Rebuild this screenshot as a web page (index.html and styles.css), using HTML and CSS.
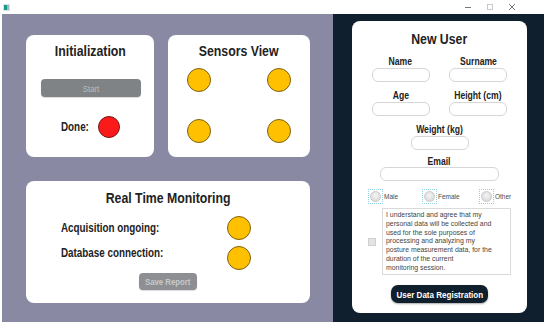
FILE: index.html
```html
<!DOCTYPE html>
<html>
<head>
<meta charset="utf-8">
<link rel="stylesheet" href="styles.css">
</head>
<body>
<div class="titlebar">
  <svg class="app-icon" width="7" height="7" viewBox="0 0 7 7">
    <rect x="0" y="0" width="7" height="7" fill="#d8e4e8"/>
    <rect x="1" y="1" width="3" height="5" fill="#1a9a8a"/>
    <rect x="4" y="1" width="2" height="5" fill="#9fb8c4"/>
  </svg>
  <div class="controls">
    <svg width="8" height="8" viewBox="0 0 8 8"><line x1="1" y1="4.5" x2="7" y2="4.5" stroke="#777" stroke-width="1"/></svg>
    <svg width="8" height="8" viewBox="0 0 8 8"><rect x="1.5" y="1.5" width="5" height="5" fill="none" stroke="#c8c8c8" stroke-width="1"/></svg>
    <svg width="8" height="8" viewBox="0 0 8 8"><path d="M1 1 L7 7 M7 1 L1 7" stroke="#777" stroke-width="1"/></svg>
  </div>
</div>
<div class="app">
  <div class="left">
    <div class="row-top">
      <section class="card init">
        <h2 class="title">Initialization</h2>
        <button class="btn btn-gray start"><span class="narrow">Start</span></button>
        <div class="done"><span class="done-label">Done:</span><span class="led red"></span></div>
      </section>
      <section class="card sensors">
        <h2 class="title">Sensors View</h2>
        <div class="sensor-grid">
          <span class="led yellow"></span>
          <span class="led yellow"></span>
          <span class="led yellow"></span>
          <span class="led yellow"></span>
        </div>
      </section>
    </div>
    <section class="card monitor">
      <h2 class="title">Real Time Monitoring</h2>
      <div class="status-grid">
        <span class="status-label">Acquisition ongoing:</span><span class="led yellow"></span>
        <span class="status-label up">Database connection:</span><span class="led yellow"></span>
      </div>
      <button class="btn btn-gray save"><span class="narrow">Save Report</span></button>
    </section>
  </div>
  <div class="right">
    <section class="card user">
      <h2 class="title user-title">New User</h2>
      <div class="fields">
        <div class="field"><label>Name</label><span class="input"></span></div>
        <div class="field"><label>Surname</label><span class="input"></span></div>
        <div class="field"><label>Age</label><span class="input"></span></div>
        <div class="field"><label>Height (cm)</label><span class="input"></span></div>
      </div>
      <div class="field single"><label>Weight (kg)</label><span class="input"></span></div>
      <div class="field single email"><label>Email</label><span class="input wide"></span></div>
      <div class="radio-row">
        <div class="radio"><span class="radio-box"><span class="radio-dot"></span></span><span>Male</span></div>
        <div class="radio"><span class="radio-box"><span class="radio-dot"></span></span><span>Female</span></div>
        <div class="radio"><span class="radio-box"><span class="radio-dot"></span></span><span>Other</span></div>
      </div>
      <div class="consent">
        <span class="checkbox"></span>
        <div class="consent-text">I understand and agree that my<br>personal data will be collected and<br>used for the sole purposes of<br>processing and analyzing my<br>posture measurement data, for the<br>duration of the current<br>monitoring session.</div>
      </div>
      <button class="btn btn-dark"><span class="narrow">User Data Registration</span></button>
    </section>
  </div>
</div>
</body>
</html>
```
FILE: styles.css
```css
* { box-sizing: border-box; }
body {
  margin: 0;
  width: 550px;
  height: 327px;
  overflow: hidden;
  background: #ffffff;
  font-family: "Liberation Sans", Arial, sans-serif;
  color: #222;
}
/* Arial-Narrow look: condensed Liberation Sans */
.narrow {
  display: inline-block;
  transform: scaleX(0.82);
  white-space: nowrap;
}

.titlebar {
  height: 14px;
  display: flex;
  align-items: center;
  justify-content: space-between;
  padding: 0 34px 0 3px;
}
.app-icon { display: block; }
.controls {
  display: flex;
  gap: 14px;
  align-items: center;
}
.controls svg { display: block; }

.app {
  display: flex;
  height: 308px;
  margin: 0 6px 0 2px;
}
.left {
  width: 331px;
  background: #8989a3;
  padding: 21px 0 0 24px;
}
.right {
  flex: 1;
  background: #0f1f2d;
  padding: 7px 0 0 19px;
}
.row-top {
  display: flex;
  gap: 14px;
}
.card {
  background: #ffffff;
  border-radius: 8px;
  display: flex;
  flex-direction: column;
  align-items: center;
}
.title {
  margin: 7px 0 0;
  font-size: 15px;
  line-height: 17px;
  font-weight: bold;
  color: #222;
  white-space: nowrap;
  transform: scaleX(0.82);
}
.init { width: 128px; height: 122px; }
.sensors { width: 142px; height: 122px; }

.btn {
  border: none;
  font-family: inherit;
  padding: 0;
  display: flex;
  align-items: center;
  justify-content: center;
}
.btn-gray { border-radius: 4px; }
.start {
  margin-top: 20px;
  margin-left: 2px;
  width: 100px;
  height: 18px;
  background: #7f8386;
  color: #b9bbbd;
  font-size: 9.5px;
  box-shadow: 0 1px 1px rgba(0,0,0,0.15);
}
.done {
  margin-top: 19px;
  display: flex;
  align-items: center;
  gap: 9px;
  font-size: 12px;
  font-weight: bold;
}
.done-label {
  display: inline-block;
  transform: scaleX(0.82);
  transform-origin: left center;
  margin-right: -6px;
}
.led {
  display: block;
  width: 24px;
  height: 24px;
  border-radius: 50%;
}
.led.yellow { background: #ffc000; border: 1px solid #7d6214; }
.led.red { width: 22px; height: 22px; background: #fb1a1a; border: 1px solid #7a1515; }

.sensor-grid {
  margin-top: 9px;
  display: grid;
  grid-template-columns: 24px 24px;
  column-gap: 56px;
  row-gap: 27px;
}

.monitor {
  margin-top: 24px;
  width: 284px;
  height: 122px;
}
.monitor .title { margin-top: 8px; }
.status-grid {
  margin-top: 10px;
  align-self: stretch;
  padding-left: 35px;
  display: grid;
  grid-template-columns: 166px 24px;
  row-gap: 6px;
  align-items: center;
}
.status-label {
  font-size: 12px;
  font-weight: bold;
  white-space: nowrap;
  transform: scaleX(0.82);
  transform-origin: left center;
}
.status-label.up { margin-bottom: 10px; }
.save {
  margin-top: 3px;
  width: 58px;
  height: 17px;
  background: #8d8f92;
  color: #c8c9cb;
  font-size: 9.5px;
  font-weight: bold;
  box-shadow: 0 1px 1px rgba(0,0,0,0.15);
}

.user {
  width: 175px;
  height: 292px;
}
.user-title { margin-top: 9px; }
.fields {
  margin-top: 8px;
  width: 100%;
  padding: 0 10px;
  display: grid;
  grid-template-columns: 1fr 1fr;
  row-gap: 7px;
}
.field {
  display: flex;
  flex-direction: column;
  align-items: center;
}
.field label {
  font-size: 10.5px;
  line-height: 12px;
  font-weight: bold;
  color: #222;
  white-space: nowrap;
  transform: scaleX(0.82);
}
.input {
  display: block;
  margin-top: 1px;
  width: 58px;
  height: 14px;
  border: 1px solid #d6d6d6;
  border-radius: 6px;
  background: #fff;
}
.field.single { margin-top: 7px; }
.field.email { margin-top: 5px; }
.input.wide { width: 119px; margin-top: 0; }

.radio-row {
  margin-top: 8px;
  width: 100%;
  padding-left: 16px;
  display: grid;
  grid-template-columns: 54px 57px auto;
  font-size: 6.5px;
  color: #4a4a4a;
}
.radio {
  display: flex;
  align-items: center;
  gap: 1px;
}
.radio-box {
  width: 15px;
  height: 15px;
  border: 1px dotted #8fd3df;
  display: flex;
  align-items: center;
  justify-content: center;
}
.radio-dot {
  width: 11px;
  height: 11px;
  border-radius: 50%;
  background: radial-gradient(circle at 50% 40%, #f4f4f4, #d4d4d4);
  border: 1px solid #c9c9c9;
}
.consent {
  margin-top: 4px;
  width: 100%;
  padding-left: 16px;
  display: flex;
  align-items: center;
  gap: 6px;
}
.checkbox {
  width: 8px;
  height: 8px;
  background: #e4e4e4;
  border: 1px solid #cfcfcf;
}
.consent-text {
  width: 129px;
  height: 67px;
  border: 1px solid #dadada;
  padding: 2px 3px;
  font-size: 6.9px;
  line-height: 8.8px;
  color: #444;
  white-space: nowrap;
  overflow: hidden;
}
.btn-dark {
  margin-top: 10px;
  width: 97px;
  height: 18px;
  border-radius: 7px;
  background: #0f1f2d;
  color: #fff;
  font-size: 9.8px;
  font-weight: bold;
  box-shadow: 0 1px 2px rgba(0,0,0,0.35);
}
```
